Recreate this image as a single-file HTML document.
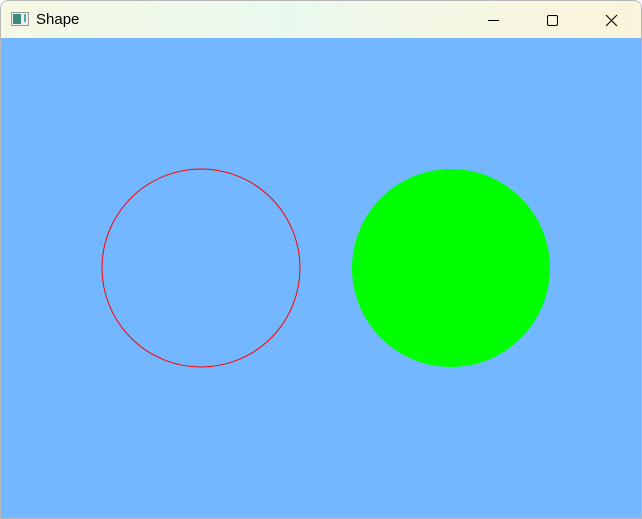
<!DOCTYPE html>
<html><head><style>
html,body{margin:0;padding:0;width:642px;height:519px;overflow:hidden;background:#fff;}
.win{position:absolute;left:0;top:0;width:640px;height:517px;border:1px solid #b9b9b9;border-radius:8px 8px 0 0;overflow:hidden;}
.title{position:absolute;left:0;top:0;width:640px;height:37px;background:linear-gradient(100deg,#f5f8e3 0%,#e9f8ee 45%,#f4f6e3 70%,#fbf3da 100%);}
.title span{position:absolute;left:35px;top:10px;font:15px "Liberation Sans",sans-serif;color:#000;}
.client{position:absolute;left:0;top:37px;width:640px;height:480px;background:#72b7ff;}
</style></head><body>
<div class="win">
<div class="title">
<svg style="position:absolute;left:10px;top:11px" width="18" height="15"><rect x="0.5" y="0.5" width="17" height="13" fill="#eee" stroke="#999"/><rect x="2" y="2" width="8" height="10" fill="#3a8a7a"/><rect x="13" y="2" width="2" height="8" fill="#5aa"/></svg>
<span>Shape</span>
<svg style="position:absolute;left:480px;top:10px" width="150" height="18">
<line x1="7" y1="9.5" x2="18" y2="9.5" stroke="#000" stroke-width="1"/>
<rect x="66.5" y="4.5" width="10" height="10" rx="1.5" fill="none" stroke="#000"/>
<path d="M125 4 L136 15 M136 4 L125 15" stroke="#000" stroke-width="1.1"/>
</svg>
</div>
<div class="client">
<svg width="640" height="480">
<circle cx="200" cy="230" r="99" fill="none" stroke="#ff0000" stroke-width="1"/>
<circle cx="450" cy="230" r="99" fill="#00ff00"/>
</svg>
</div>
</div>
</body></html>
